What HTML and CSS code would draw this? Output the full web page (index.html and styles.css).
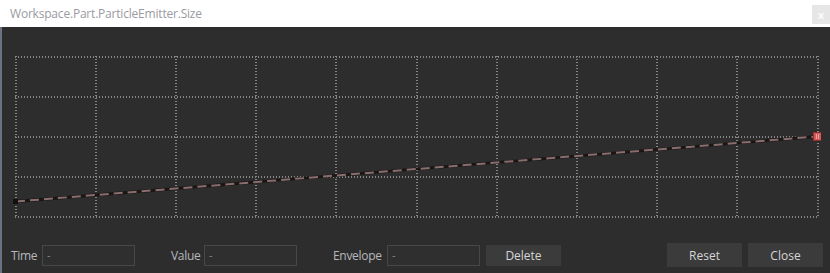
FILE: index.html
```html
<!DOCTYPE html>
<html>
<head>
<meta charset="utf-8">
<link rel="stylesheet" href="styles.css">
</head>
<body>
<div class="window">
  <div class="titlebar">
    <span class="title">Workspace.Part.ParticleEmitter.Size</span>
    <span class="close-x">x</span>
  </div>
  <div class="panel">
    <div class="graph">
      <svg width="810" height="166" viewBox="-4 -3 810 166" xmlns="http://www.w3.org/2000/svg">
        <g stroke="#858585" stroke-width="2" stroke-dasharray="1 2" fill="none">
          <line x1="0" y1="1" x2="804" y2="1"/>
          <line x1="0" y1="41" x2="804" y2="41"/>
          <line x1="0" y1="81" x2="804" y2="81"/>
          <line x1="0" y1="121" x2="804" y2="121"/>
          <line x1="0" y1="161" x2="804" y2="161"/>
          <line x1="1" y1="0" x2="1" y2="162"/>
          <line x1="81" y1="0" x2="81" y2="162"/>
          <line x1="161" y1="0" x2="161" y2="162"/>
          <line x1="241" y1="0" x2="241" y2="162"/>
          <line x1="321" y1="0" x2="321" y2="162"/>
          <line x1="402" y1="0" x2="402" y2="162"/>
          <line x1="482" y1="0" x2="482" y2="162"/>
          <line x1="562" y1="0" x2="562" y2="162"/>
          <line x1="642" y1="0" x2="642" y2="162"/>
          <line x1="722" y1="0" x2="722" y2="162"/>
          <line x1="803" y1="0" x2="803" y2="162"/>
        </g>
        <line x1="1" y1="145.5" x2="802" y2="80.5" stroke="#1a1616" stroke-width="2.8"/>
        <line x1="1" y1="145.5" x2="802" y2="80.5" stroke="#8a6e6e" stroke-width="2" stroke-dasharray="9 5"/>
        <rect x="-2" y="143" width="5" height="5" fill="#111"/>
        <rect x="798.5" y="76.5" width="8" height="8" fill="#d85858" stroke="#8a3030" stroke-width="1"/>
        <rect x="801" y="78" width="1" height="5" fill="#f2a0a0"/>
        <rect x="803" y="78" width="1" height="5" fill="#f2a0a0"/>
      </svg>
    </div>
    <div class="controls">
      <label class="lbl lbl-time">Time</label>
      <div class="field">-</div>
      <label class="lbl lbl-value">Value</label>
      <div class="field">-</div>
      <label class="lbl lbl-env">Envelope</label>
      <div class="field">-</div>
      <button class="btn btn-delete">Delete</button>
      <div class="spacer"></div>
      <button class="btn btn-big">Reset</button>
      <button class="btn btn-big btn-last">Close</button>
    </div>
  </div>
</div>
</body>
</html>
```

FILE: styles.css
```css
html, body {
  margin: 0;
  padding: 0;
  background: #2d2d2d;
}
.window {
  width: 830px;
  height: 273px;
  display: flex;
  flex-direction: column;
  font-family: "Open Sans", "Noto Sans", sans-serif;
}
.titlebar {
  height: 27px;
  background: #ffffff;
  display: flex;
  align-items: center;
  position: relative;
}
.title {
  margin-left: 10px;
  font-size: 12px;
  color: #9a9aa2;
  letter-spacing: -0.2px;
}
.close-x {
  position: absolute;
  right: 0;
  top: 5px;
  width: 18px;
  height: 19px;
  background: #e6e6e6;
  color: #fafafa;
  font-size: 11px;
  font-weight: bold;
  display: flex;
  align-items: center;
  justify-content: center;
}
.panel {
  flex: 1;
  background: #2d2d2d;
  border-left: 2px solid #6b7380;
  display: flex;
  flex-direction: column;
}
.graph {
  padding: 26px 0 0 9px;
  height: 166px;
}
.graph svg {
  display: block;
}
.controls {
  margin-top: 24px;
  display: flex;
  align-items: center;
  height: 24px;
  padding-left: 9px;
}
.lbl {
  font-size: 12px;
  color: #b8b8bc;
  letter-spacing: -0.3px;
  white-space: nowrap;
}
.lbl-time { width: 31px; }
.lbl-value { margin-left: 36px; width: 33px; }
.lbl-env { margin-left: 36px; width: 54px; }
.field {
  box-sizing: border-box;
  width: 93px;
  height: 21px;
  border: 1px solid #474747;
  background: #2f2f2f;
  color: #8a8a8a;
  font-size: 11px;
  line-height: 18px;
  padding-left: 4px;
}
.btn {
  box-sizing: border-box;
  border: none;
  background: #3b3b3b;
  color: #d6d6d6;
  font-family: "Open Sans", "Noto Sans", sans-serif;
  font-size: 12px;
  padding: 0;
}
.btn-delete {
  margin-left: 6px;
  width: 75px;
  height: 21px;
}
.spacer { flex: 1; }
.btn-big {
  width: 75px;
  height: 24px;
  margin-right: 6px;
}
.btn-last {
  margin-right: 7px;
}
```
